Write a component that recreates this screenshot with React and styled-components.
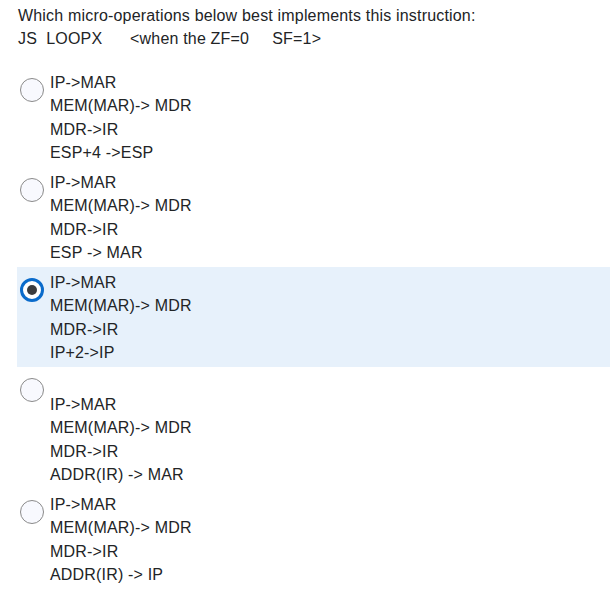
import React, { useState } from "react";
import styled, { createGlobalStyle } from "styled-components";

const GlobalStyle = createGlobalStyle`
  html, body {
    margin: 0;
    padding: 0;
    background: #ffffff;
  }
  body {
    font-family: "Liberation Sans", Arial, sans-serif;
    color: #222426;
  }
`;

const Page = styled.div`
  width: 610px;
  padding: 4px 0 0 17px;
  box-sizing: border-box;
  font-size: 16px;
  line-height: 23.25px;
  letter-spacing: 0.18px;
  color: #222426;
`;

const Question = styled.div`
  padding-left: 1px;
`;

const QuestionLine = styled.div`
  white-space: pre;
`;

const AnswerList = styled.div`
  margin-top: 16.5px;
  display: flex;
  flex-direction: column;
`;

const Answer = styled.label`
  display: flex;
  align-items: flex-start;
  gap: 6px;
  padding: 4px 0 3px 3px;
  background: ${(p) => (p.$selected ? "#e7f1fb" : "transparent")};
  cursor: pointer;
`;

const Radio = styled.span`
  flex: none;
  box-sizing: border-box;
  width: 24px;
  height: 24px;
  margin-top: 7px;
  border-radius: 50%;
  display: flex;
  align-items: center;
  justify-content: center;
  border: ${(p) => (p.$checked ? "3px solid #0a6bcb" : "1.5px solid #8a8a8a")};
  background: ${(p) => (p.$checked ? "#ffffff" : "#f8f9fe")};
`;

const Dot = styled.span`
  width: 10px;
  height: 10px;
  border-radius: 50%;
  background: #3b3c3e;
`;

const Lines = styled.div`
  display: flex;
  flex-direction: column;
  padding-top: ${(p) => (p.$lead ? "22px" : "0")};
`;

const Line = styled.div`
  white-space: pre;
`;

const answers = [
  { lines: ["IP->MAR", "MEM(MAR)-> MDR", "MDR->IR", "ESP+4 ->ESP"] },
  { lines: ["IP->MAR", "MEM(MAR)-> MDR", "MDR->IR", "ESP -> MAR"] },
  { lines: ["IP->MAR", "MEM(MAR)-> MDR", "MDR->IR", "IP+2->IP"] },
  { lines: ["IP->MAR", "MEM(MAR)-> MDR", "MDR->IR", "ADDR(IR) -> MAR"], lead: true },
  { lines: ["IP->MAR", "MEM(MAR)-> MDR", "MDR->IR", "ADDR(IR) -> IP"] },
];

export default function App() {
  const [selected, setSelected] = useState(2);
  return (
    <>
      <GlobalStyle />
      <Page>
        <Question>
          <QuestionLine>Which micro-operations below best implements this instruction:</QuestionLine>
          <QuestionLine>{"JS  LOOPX      <when the ZF=0     SF=1>"}</QuestionLine>
        </Question>
        <AnswerList role="radiogroup">
          {answers.map((a, i) => (
            <Answer
              key={i}
              $selected={selected === i}
              role="radio"
              aria-checked={selected === i}
              onClick={() => setSelected(i)}
            >
              <Radio $checked={selected === i}>{selected === i && <Dot />}</Radio>
              <Lines $lead={a.lead}>
                {a.lines.map((l, j) => (
                  <Line key={j}>{l}</Line>
                ))}
              </Lines>
            </Answer>
          ))}
        </AnswerList>
      </Page>
    </>
  );
}
